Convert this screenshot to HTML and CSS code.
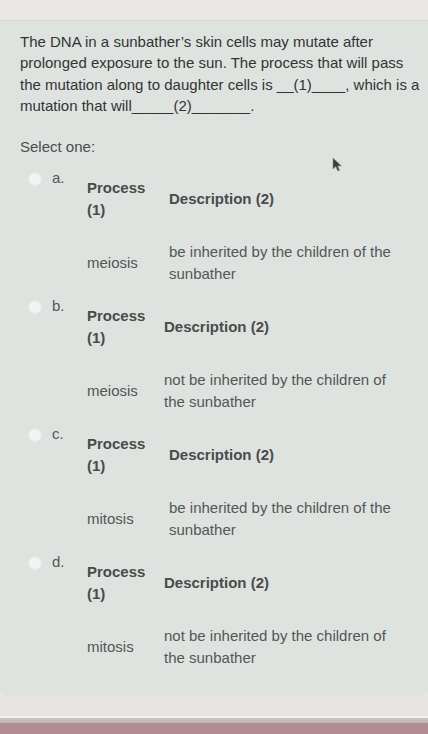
FILE: index.html
```html
<!DOCTYPE html>
<html lang="en">
<head>
<meta charset="utf-8">
<title>Question</title>
<link rel="stylesheet" href="styles.css">
</head>
<body>
<div class="page">
  <div class="card">
    <p class="qtext">The DNA in a sunbather’s skin cells may mutate after prolonged exposure to the sun. The process that will pass the mutation along to daughter cells is __(1)____, which is a mutation that will_____(2)_______.</p>
    <div class="prompt">Select one:</div>
    <div class="answer">
      <div class="opt">
        <span class="radio"></span>
        <span class="letter">a.</span>
        <table class="grid">
          <tr><td class="c1 head">Process (1)</td><td class="head">Description (2)</td></tr>
          <tr><td class="c1">meiosis</td><td>be inherited by the children of the sunbather</td></tr>
        </table>
      </div>
      <div class="opt opt-long">
        <span class="radio"></span>
        <span class="letter">b.</span>
        <table class="grid">
          <tr><td class="c1 head">Process (1)</td><td class="head">Description (2)</td></tr>
          <tr><td class="c1">meiosis</td><td>not be inherited by the children of the sunbather</td></tr>
        </table>
      </div>
      <div class="opt">
        <span class="radio"></span>
        <span class="letter">c.</span>
        <table class="grid">
          <tr><td class="c1 head">Process (1)</td><td class="head">Description (2)</td></tr>
          <tr><td class="c1">mitosis</td><td>be inherited by the children of the sunbather</td></tr>
        </table>
      </div>
      <div class="opt opt-long">
        <span class="radio"></span>
        <span class="letter">d.</span>
        <table class="grid">
          <tr><td class="c1 head">Process (1)</td><td class="head">Description (2)</td></tr>
          <tr><td class="c1">mitosis</td><td>not be inherited by the children of the sunbather</td></tr>
        </table>
      </div>
    </div>
    <svg class="cursor" width="11" height="15" viewBox="0 0 11 15" aria-hidden="true">
      <path d="M1 1 L1 12 L3.8 9.6 L5.8 14 L7.6 13.2 L5.7 8.9 L9.4 8.9 Z" fill="#3d3f3f" stroke="#8a8d8c" stroke-width="0.6"/>
    </svg>
  </div>
  <div class="below"></div>
  <div class="edge-light"></div>
  <div class="edge-dark"></div>
  <div class="pink"></div>
</div>
</body>
</html>
```

FILE: styles.css
```css
html, body {
  margin: 0;
  padding: 0;
}
body {
  background: #e9e8e5;
  font-family: "Liberation Sans", Arial, sans-serif;
  font-size: 15px;
}
.page {
  display: flex;
  flex-direction: column;
  min-height: 100vh;
  padding-top: 20px;
  box-sizing: border-box;
}
.card {
  position: relative;
  background: #dee3e0;
  border-top: 1px solid #d6dad8;
  border-radius: 0 0 5px 5px;
  padding: 10px 8px 16px 20px;
}
.qtext {
  margin: 0;
  line-height: 21.4px;
  color: #333434;
}
.prompt {
  margin-top: 19px;
  line-height: 21.5px;
  color: #4c4d4d;
}
.answer {
  margin-top: 10px;
}
.opt {
  display: flex;
  align-items: flex-start;
  margin-left: 9px;
  margin-right: 12px;
}
.radio {
  flex: none;
  width: 12px;
  height: 12px;
  margin-top: 6px;
  border-radius: 50%;
  background: #f2f3f2;
  box-shadow: 0 0 0 1px #e2e6e4, 0 0 2px 1px #e8ebea;
}
.letter {
  flex: none;
  width: 27px;
  margin-left: 11px;
  line-height: 22px;
  color: #565757;
}
.grid {
  flex: 1;
  border-collapse: collapse;
  border-spacing: 0;
}
.grid td {
  padding: 10px 8px;
  line-height: 22px;
  vertical-align: middle;
  text-align: left;
  color: #555656;
}
.grid td.head {
  font-weight: bold;
  color: #4a4b4b;
}
.grid td.c1 {
  width: 66px;
}
.opt-long .grid td.c1 {
  width: 61px;
}
.cursor {
  position: absolute;
  left: 332px;
  top: 136px;
}
.below {
  height: 21px;
  background: #e6e4e1;
}
.edge-light {
  height: 2px;
  background: #f1f0ee;
}
.edge-dark {
  height: 5px;
  background: linear-gradient(#c9c8c7, #b9b5b5);
}
.pink {
  flex: 1;
  background: #b18c90;
}
```
